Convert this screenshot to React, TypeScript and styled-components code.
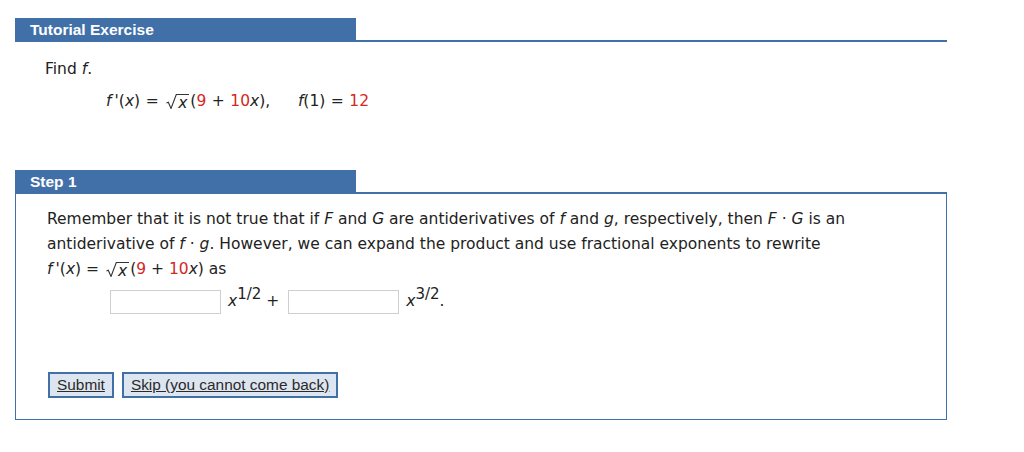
import React from "react";
import styled, { createGlobalStyle } from "styled-components";

const BLUE = "#4170a8";

const GlobalStyle = createGlobalStyle`
  html, body {
    margin: 0;
    padding: 0;
    background: #ffffff;
  }
  body {
    font-family: "DejaVu Sans", Verdana, sans-serif;
    font-size: 15.5px;
    color: #222222;
  }
`;

const Page = styled.div`
  width: 1024px;
  height: 452px;
  padding: 18px 0 0 15px;
  box-sizing: border-box;
`;

const Section = styled.section<{ $gap?: number }>`
  width: 932px;
  margin-top: ${({ $gap }) => $gap ?? 0}px;
`;

const HeaderRow = styled.div`
  display: flex;
  align-items: flex-end;
  border-bottom: 2px solid ${BLUE};
`;

const HeaderTab = styled.div`
  width: 341px;
  height: 22px;
  background: ${BLUE};
  color: #ffffff;
  font-family: "Liberation Sans", Arial, sans-serif;
  font-weight: bold;
  font-size: 15.5px;
  line-height: 23px;
  padding-left: 15px;
  box-sizing: border-box;
`;

const Intro = styled.div`
  padding: 15px 0 0 30px;
`;

const Line = styled.div`
  line-height: 25px;
`;

const Equation = styled.div`
  padding: 7px 0 0 61px;
  line-height: 25px;
  word-spacing: 0.6px;
`;

const StepBox = styled.div`
  border: 1px solid ${BLUE};
  border-top: none;
  height: 226px;
  box-sizing: border-box;
  padding: 13px 0 0 31px;
`;

const I = styled.i`
  font-style: italic;
`;

const Red = styled.span`
  color: #d4281e;
`;

const Root = styled.span`
  display: inline-flex;
  align-items: flex-start;
  vertical-align: -3px;
  margin: 0 1px 0 2px;
`;

const Radical = styled.svg`
  display: block;
  width: 11px;
  height: 15px;
`;

const Radicand = styled.span`
  border-top: 1px solid #333333;
  line-height: 16px;
  padding: 0 2px 0 1px;
  font-style: italic;
`;

const AnswerRow = styled.div`
  display: flex;
  align-items: center;
  padding: 8px 0 0 63px;
  height: 24px;
`;

const AnswerInput = styled.input`
  width: 111px;
  height: 24px;
  box-sizing: border-box;
  border: 1px solid #cfcfcf;
  margin: 0;
  padding: 0 4px;
  font: inherit;
`;

const Term = styled.span<{ $trail?: number }>`
  margin: 0 ${({ $trail }) => $trail ?? 0}px 0 7px;
  position: relative;
  top: -1px;
`;

const Sup = styled.sup`
  font-size: 15px;
  vertical-align: 7px;
  line-height: 0;
`;

const ButtonRow = styled.div`
  display: flex;
  gap: 8px;
  padding: 58px 0 0 1px;
`;

const ActionButton = styled.button`
  height: 26px;
  padding: 0 7px;
  background: #dde6f0;
  border: 2px solid ${BLUE};
  color: #2a2a2a;
  font-family: "Liberation Sans", Arial, sans-serif;
  font-size: 15.4px;
  text-decoration: underline;
  cursor: pointer;
`;

const Fp = () => (
  <>
    <I>f</I>&thinsp;'(<I>x</I>)
  </>
);

const SqrtX = () => (
  <Root>
    <Radical viewBox="0 0 11 15">
      <path
        d="M0.5 9 L2.3 8.2 L5 14.5 L10.3 0.5 L11 0.5"
        fill="none"
        stroke="#333333"
        strokeWidth="1.1"
      />
    </Radical>
    <Radicand>x</Radicand>
  </Root>
);

export default function App() {
  return (
    <>
      <GlobalStyle />
      <Page>
        <Section>
          <HeaderRow>
            <HeaderTab>Tutorial Exercise</HeaderTab>
          </HeaderRow>
          <Intro>
            <Line>
              Find <I>f</I>.
            </Line>
            <Equation>
              <Fp /> = <SqrtX />(<Red>9</Red> + <Red>10</Red>
              <I>x</I>),&nbsp;&nbsp;&nbsp;&nbsp; <I>f</I>(1) = <Red>12</Red>
            </Equation>
          </Intro>
        </Section>

        <Section $gap={56}>
          <HeaderRow>
            <HeaderTab>Step 1</HeaderTab>
          </HeaderRow>
          <StepBox>
            <Line>
              Remember that it is not true that if <I>F</I> and <I>G</I> are
              antiderivatives of <I>f</I> and <I>g</I>, respectively, then{" "}
              <I>F</I> · <I>G</I> is an
            </Line>
            <Line>
              antiderivative of <I>f</I> · <I>g</I>. However, we can expand the
              product and use fractional exponents to rewrite
            </Line>
            <Line>
              <Fp /> = <SqrtX />(<Red>9</Red> + <Red>10</Red>
              <I>x</I>) as
            </Line>
            <AnswerRow>
              <AnswerInput type="text" />
              <Term $trail={9}>
                <I>x</I>
                <Sup>1/2</Sup> +
              </Term>
              <AnswerInput type="text" />
              <Term>
                <I>x</I>
                <Sup>3/2</Sup>.
              </Term>
            </AnswerRow>
            <ButtonRow>
              <ActionButton type="button">Submit</ActionButton>
              <ActionButton type="button">Skip (you cannot come back)</ActionButton>
            </ButtonRow>
          </StepBox>
        </Section>
      </Page>
    </>
  );
}
